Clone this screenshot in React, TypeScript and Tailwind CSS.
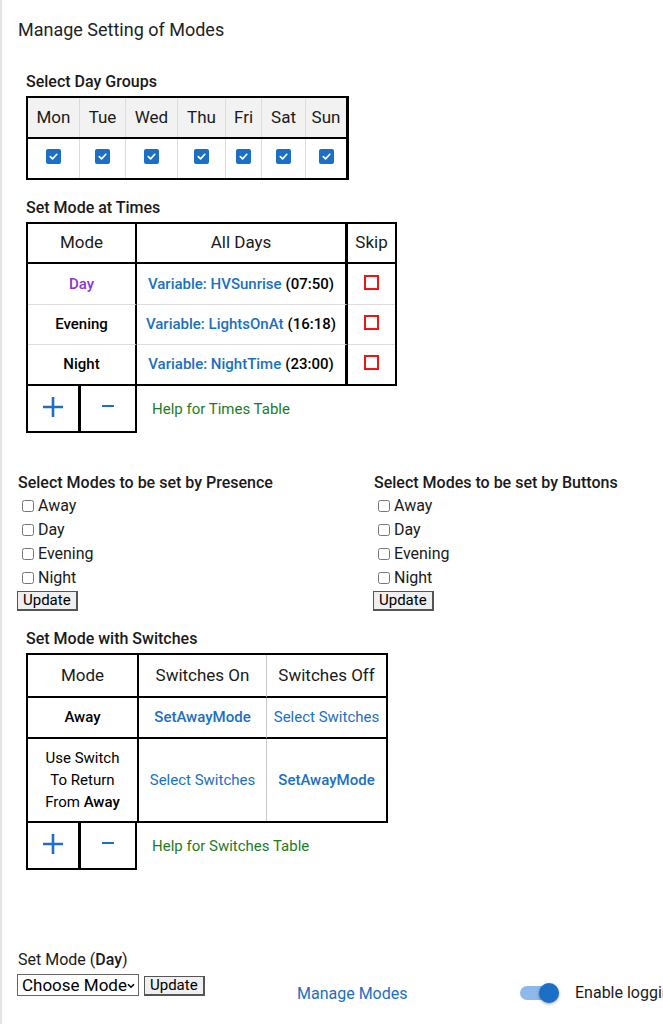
import React from "react";

const days = [
  { label: "Mon", w: "w-[51px]" },
  { label: "Tue", w: "w-[46px]" },
  { label: "Wed", w: "w-[52px]" },
  { label: "Thu", w: "w-[48px]" },
  { label: "Fri", w: "w-[36px]" },
  { label: "Sat", w: "w-[44px]" },
  { label: "Sun", w: "w-[41px]" },
];

const times = [
  { mode: "Day", modeClass: "text-[#8a35de] font-medium", variable: "HVSunrise", time: "07:50" },
  { mode: "Evening", modeClass: "text-black font-medium", variable: "LightsOnAt", time: "16:18" },
  { mode: "Night", modeClass: "text-black font-medium", variable: "NightTime", time: "23:00" },
];

const modes = ["Away", "Day", "Evening", "Night"];

function BlueCheck() {
  return (
    <span className="inline-flex w-[15px] h-[15px] items-center justify-center rounded-[2px] bg-[#1c6fc6]">
      <svg width="11" height="11" viewBox="0 0 12 12" fill="none">
        <path d="M2.5 6.2 L5 8.6 L9.6 3.6" stroke="white" strokeWidth="1.8" strokeLinecap="round" strokeLinejoin="round" />
      </svg>
    </span>
  );
}

function SkipBox() {
  return <span className="inline-block w-[15px] h-[15px] border-2 border-[#f01414]" />;
}

function AddRemove({ help }: { help: string }) {
  return (
    <div className="flex items-center">
      <div className="flex">
        <button className="w-[55px] h-[47px] border-l-2 border-r-[3px] border-b-2 border-black flex items-center justify-center pb-[4px]">
          <svg width="24" height="24" viewBox="0 0 24 24">
            <path d="M12 2 V22 M2 12 H22" stroke="#1b6fc6" strokeWidth="2.6" />
          </svg>
        </button>
        <button className="w-[56px] h-[47px] border-r-2 border-b-2 border-black flex items-center justify-center pb-[6px]">
          <svg width="14" height="4" viewBox="0 0 14 4">
            <path d="M1 2 H13" stroke="#1b6fc6" strokeWidth="2" />
          </svg>
        </button>
      </div>
      <span className="ml-[15px] text-[15px] text-[#1f7a1f]">{help}</span>
    </div>
  );
}

function UpdateButton() {
  return (
    <button className="h-[20px] px-[5px] bg-[#efefef] border border-[#555] border-r-2 border-b-2 text-[15px] leading-none text-black">
      Update
    </button>
  );
}

function ModeChecklist({ title }: { title: string }) {
  return (
    <div className="flex flex-col">
      <div className="text-[16px] leading-[20px] font-medium">{title}</div>
      <div className="flex flex-col mt-[1px]">
        {modes.map((m) => (
          <label key={m} className="flex items-center h-[24px] text-[16px]">
            <input type="checkbox" className="w-[12px] h-[12px] ml-[4px] mr-[4px] m-0" />
            {m}
          </label>
        ))}
      </div>
      <div className="flex mt-[1px] -ml-[1px]">
        <UpdateButton />
      </div>
    </div>
  );
}

export default function App() {
  return (
    <div
      className="w-[663px] h-[1024px] overflow-hidden bg-white border-l-2 border-[#e4e4e4] text-[#1a1a1a]"
      style={{ fontFamily: "Roboto, 'Noto Sans', sans-serif" }}
    >
      <div className="pl-[16px] pt-[18px] w-[720px]">
        <h1 className="text-[18px] leading-[24px] text-[#222]">Manage Setting of Modes</h1>

        {/* Day groups */}
        <div className="ml-[8px] mt-[30px]">
          <div className="text-[16px] leading-[20px] font-medium">Select Day Groups</div>
          <div className="mt-[4px] inline-flex flex-col border-2 border-r-[3px] border-black">
            <div className="flex border-b-2 border-black bg-[#f2f2f2]">
              {days.map((d, i) => (
                <div
                  key={d.label}
                  className={`${d.w} h-[39px] flex items-center justify-center text-[17px] ${i > 0 ? "border-l border-[#dcdcdc]" : ""}`}
                >
                  {d.label}
                </div>
              ))}
            </div>
            <div className="flex">
              {days.map((d, i) => (
                <div
                  key={d.label}
                  className={`${d.w} h-[39px] flex items-center justify-center pb-[4px] ${i > 0 ? "border-l border-[#dcdcdc]" : ""}`}
                >
                  <BlueCheck />
                </div>
              ))}
            </div>
          </div>
        </div>

        {/* Times */}
        <div className="ml-[8px] mt-[18px]">
          <div className="text-[16px] leading-[20px] font-medium">Set Mode at Times</div>
          <div className="mt-[4px] inline-grid grid-cols-[109px_211px_47px] border-2 border-black">
            <div className="h-[40px] flex items-center justify-center text-[17px] border-r-2 border-b-2 border-black">Mode</div>
            <div className="h-[40px] flex items-center justify-center text-[17px] border-r-[3px] border-b-2 border-black">All Days</div>
            <div className="h-[40px] flex items-center justify-center text-[17px] border-b-2 border-black">Skip</div>
            {times.map((t, i) => (
              <React.Fragment key={t.mode}>
                <div className={`h-[40px] flex items-center justify-center text-[15px] border-r-2 border-black ${t.modeClass} ${i > 0 ? "border-t border-t-[#dddddd]" : ""}`}>
                  {t.mode}
                </div>
                <div className={`h-[40px] flex items-center justify-center text-[15px] font-medium border-r-[3px] border-black ${i > 0 ? "border-t border-t-[#dddddd]" : ""}`}>
                  <span className="text-[#1b6fc6]">Variable: {t.variable}</span>
                  <span className="ml-[4px] text-black">({t.time})</span>
                </div>
                <div className={`h-[40px] flex items-center justify-center pb-[4px] ${i > 0 ? "border-t border-t-[#dddddd]" : ""}`}>
                  <SkipBox />
                </div>
              </React.Fragment>
            ))}
          </div>
          <AddRemove help="Help for Times Table" />
        </div>

        {/* Presence / Buttons */}
        <div className="flex mt-[40px]">
          <div className="w-[356px]">
            <ModeChecklist title="Select Modes to be set by Presence" />
          </div>
          <div>
            <ModeChecklist title="Select Modes to be set by Buttons" />
          </div>
        </div>

        {/* Switches */}
        <div className="ml-[8px] mt-[18px]">
          <div className="text-[16px] leading-[20px] font-medium">Set Mode with Switches</div>
          <div className="mt-[4px] inline-grid grid-cols-[111px_128px_119px] border-2 border-black">
            <div className="h-[43px] flex items-center justify-center text-[17px] border-r-2 border-b-2 border-black">Mode</div>
            <div className="h-[43px] flex items-center justify-center text-[17px] border-r border-r-[#c8c8c8] border-b-2 border-b-black">Switches On</div>
            <div className="h-[43px] flex items-center justify-center text-[17px] border-b-2 border-black">Switches Off</div>

            <div className="h-[41px] flex items-center justify-center text-[15px] font-medium text-black border-r-2 border-b-2 border-black">Away</div>
            <div className="h-[41px] flex items-center justify-center text-[15px] font-medium text-[#1b6fc6] border-r border-r-[#c8c8c8] border-b-2 border-b-black">SetAwayMode</div>
            <div className="h-[41px] flex items-center justify-center text-[15px] text-[#1b6fc6] border-b-2 border-black">Select Switches</div>

            <div className="h-[82px] flex items-center justify-center text-center text-[15px] leading-[22px] text-black border-r-2 border-black">
              <span>
                Use Switch
                <br />
                To Return
                <br />
                From <span className="font-medium">Away</span>
              </span>
            </div>
            <div className="h-[82px] flex items-center justify-center text-[15px] text-[#1b6fc6] border-r border-r-[#c8c8c8]">Select Switches</div>
            <div className="h-[82px] flex items-center justify-center text-[15px] font-medium text-[#1b6fc6]">SetAwayMode</div>
          </div>
          <AddRemove help="Help for Switches Table" />
        </div>

        {/* Bottom row */}
        <div className="flex items-end mt-[80px]">
          <div className="w-[279px] flex flex-col">
            <div className="text-[16px] leading-[20px]">
              Set Mode (<span className="font-medium">Day</span>)
            </div>
            <div className="flex items-end mt-[4px] -ml-[1px]">
              <div className="relative h-[22px] w-[122px] border border-[#666] bg-white flex items-center">
                <select className="appearance-none w-full h-full bg-transparent text-[17px] leading-none pl-[4px] pr-[10px] text-black outline-none">
                  <option>Choose Mode</option>
                </select>
                <svg className="absolute right-[3px] top-[8px] pointer-events-none" width="8" height="6" viewBox="0 0 8 6">
                  <path d="M1 1.2 L4 4.2 L7 1.2" stroke="black" strokeWidth="1.6" fill="none" />
                </svg>
              </div>
              <span className="ml-[5px] flex">
                <UpdateButton />
              </span>
            </div>
          </div>
          <a className="w-[223px] text-[16px] text-[#1b6fc6] mb-[-10px]">Manage Modes</a>
          <div className="flex items-center mb-[-9px]">
            <span className="relative w-[37px] h-[14px] rounded-full bg-[#8dbaea]">
              <span className="absolute right-[-2px] top-[-3px] w-[20px] h-[20px] rounded-full bg-[#1b6fc6] shadow-[0_1px_3px_rgba(0,0,0,0.4)]" />
            </span>
            <span className="ml-[18px] text-[16px] whitespace-nowrap">Enable logging</span>
          </div>
        </div>
      </div>
    </div>
  );
}
